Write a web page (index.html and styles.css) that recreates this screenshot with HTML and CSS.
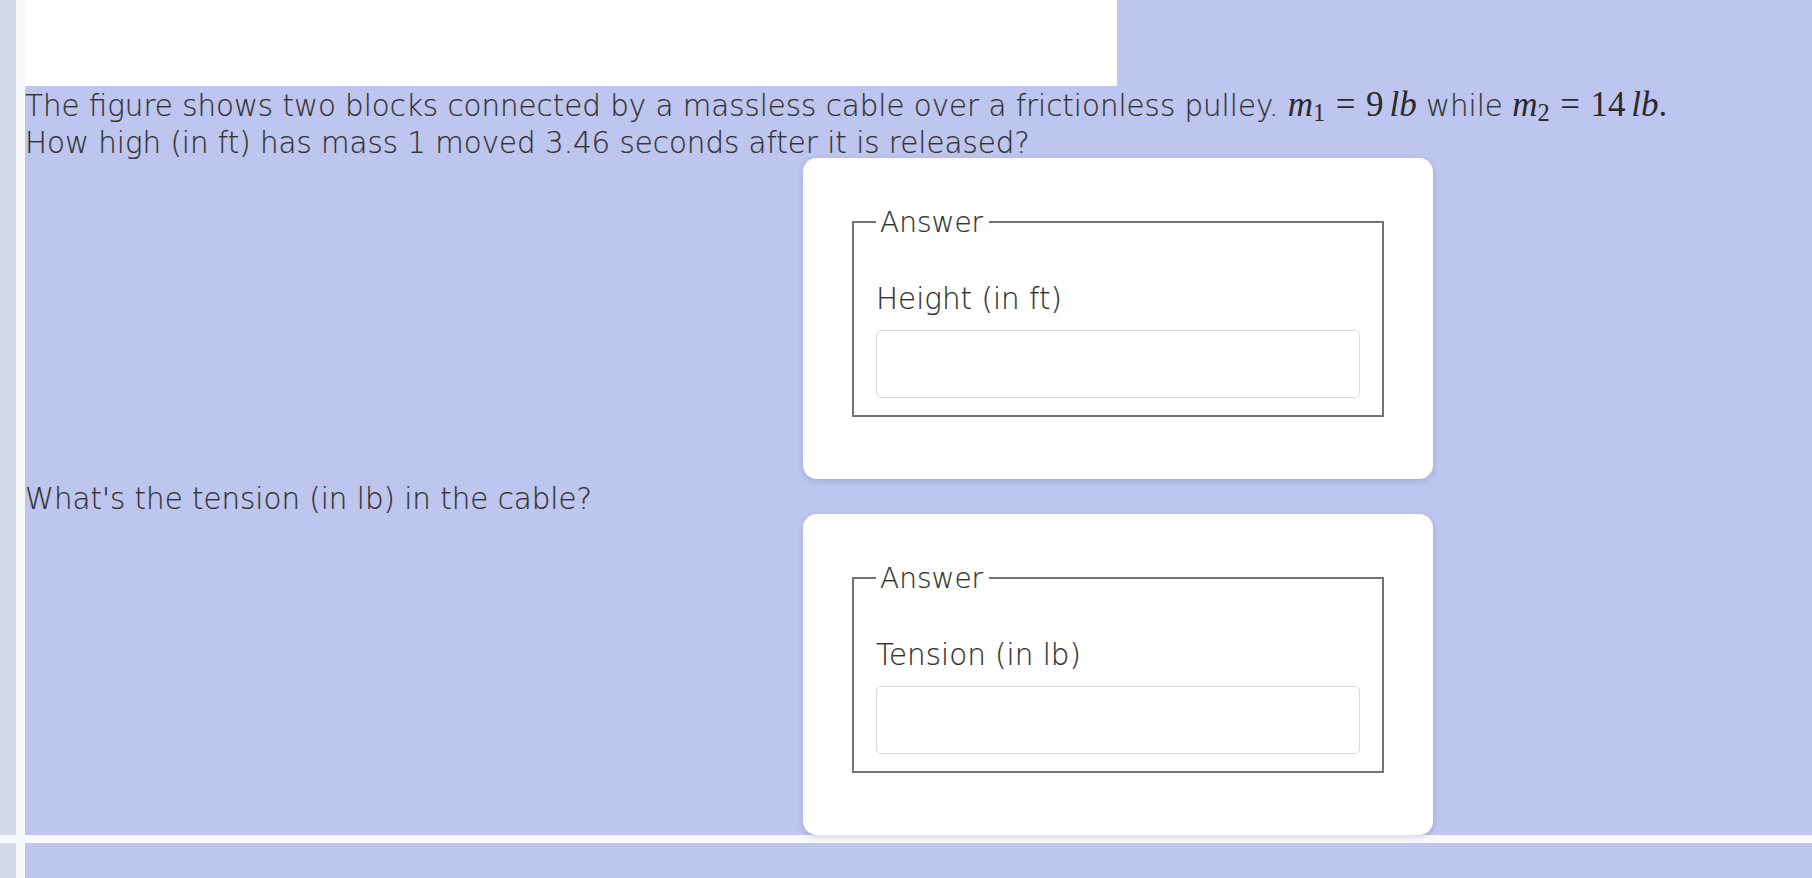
FILE: index.html
```html
<!DOCTYPE html>
<html lang="en">
<head>
<meta charset="utf-8">
<title>Pulley question</title>
<link rel="stylesheet" href="styles.css">
</head>
<body>
<div class="page">
  <div class="row">
    <div class="sidebar"></div>
    <main class="content">
      <div class="banner"></div>
      <p class="question">The figure shows two blocks connected by a massless cable over a frictionless pulley. <span class="math"><i>m</i><sub>1</sub><span class="rel">=</span>9<span class="thin"></span><i>lb</i></span> while <span class="math"><i>m</i><sub>2</sub><span class="rel">=</span>14<span class="thin"></span><i>lb</i>.</span><br>How high (in ft) has mass 1 moved 3.46 seconds after it is released?</p>
      <section class="card">
        <fieldset class="answer">
          <legend class="answer-legend">Answer</legend>
          <label class="field-label" for="height">Height (in ft)</label>
          <input class="field-input" id="height" type="text">
        </fieldset>
      </section>
      <p class="question">What's the tension (in lb) in the cable?</p>
      <section class="card">
        <fieldset class="answer">
          <legend class="answer-legend">Answer</legend>
          <label class="field-label" for="tension">Tension (in lb)</label>
          <input class="field-input" id="tension" type="text">
        </fieldset>
      </section>
    </main>
  </div>
  <div class="row row-bottom">
    <div class="sidebar"></div>
    <div class="content"></div>
  </div>
</div>
</body>
</html>
```
FILE: styles.css
```css
html, body {
  margin: 0;
  padding: 0;
}
body {
  background: #f8f9fa;
  font-family: "DejaVu Sans", "Open Sans", sans-serif;
  font-weight: 200;
  color: #333333;
  -webkit-text-stroke: 0.2px #333333;
}
.page {
  display: flex;
  flex-direction: column;
  gap: 8px;
  min-height: 100vh;
}
.row {
  display: flex;
  gap: 9px;
}
.row-bottom {
  flex: 1;
}
.sidebar {
  flex: none;
  width: 16px;
  background: #d5dae8;
}
.content {
  flex: 1;
  background: #bec5ef;
}
.banner {
  width: 1092px;
  height: 86px;
  background: #ffffff;
}
.question {
  margin: 0 0 -4px;
  padding-top: 2px;
  font-size: 29.3px;
  line-height: 37px;
}
.math {
  font-family: "Liberation Serif", "DejaVu Serif", serif;
  font-size: 35px;
  font-weight: 400;
  line-height: 0;
  color: #2a2a2a;
  -webkit-text-stroke: 0;
}
.math sub {
  font-size: 0.7em;
  vertical-align: -0.2em;
  line-height: 0;
}
.math .rel {
  padding: 0 0.3em;
}
.math .thin {
  display: inline-block;
  width: 0.17em;
}
.card {
  box-sizing: border-box;
  width: 630px;
  margin-left: 778px;
  padding: 44px 49px 62px;
  background: #ffffff;
  border-radius: 14px;
  box-shadow: 0 2px 6px rgba(40, 50, 110, 0.18);
}
.answer {
  margin: 0;
  padding: 0 22px 17px;
  border: 2px solid #737373;
}
.answer-legend {
  padding: 3px 6px 0 4px;
  font-size: 28px;
  line-height: 36px;
}
.field-label {
  display: block;
  margin-top: 40px;
  font-size: 29.4px;
  line-height: 36px;
}
.field-input {
  display: block;
  box-sizing: border-box;
  width: 100%;
  height: 68px;
  margin-top: 13px;
  border: 1px solid #dcdcdc;
  border-radius: 5px;
  background: #ffffff;
}
```
